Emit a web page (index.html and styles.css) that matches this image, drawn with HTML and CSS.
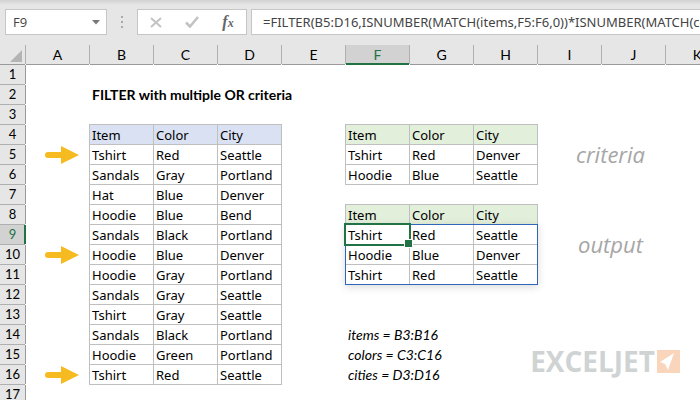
FILE: index.html
```html
<!DOCTYPE html>
<html lang="en">
<head>
    <meta charset="UTF-8">
    <meta name="viewport" content="width=device-width, initial-scale=1.0">
    <title>FILTER with multiple OR criteria</title>
    <link rel="stylesheet" href="styles.css">
</head>
<body>

<header class="formula-bar">
    <div class="name-box">
        <input type="text" class="name-input" value="F9" aria-label="Name box">
        <button class="name-arrow" aria-label="Show names">
            <svg width="8" height="5" viewBox="0 0 8 5"><path d="M0 0h8L4 4.5z" fill="#777"/></svg>
        </button>
    </div>
    <div class="dots"><i></i><i></i><i></i></div>
    <div class="tools">
        <button aria-label="Cancel">
            <svg width="12" height="11" viewBox="0 0 12 11"><path d="M1 1l10 9M11 1L1 10" stroke="#c3c3c3" stroke-width="2" fill="none"/></svg>
        </button>
        <button aria-label="Enter">
            <svg width="14" height="12" viewBox="0 0 14 12"><path d="M1 6.500l4 4L13 1" stroke="#c3c3c3" stroke-width="2.600" fill="none"/></svg>
        </button>
        <button class="fx" aria-label="Insert function"><span>f<small>x</small></span></button>
    </div>
    <input type="text" class="formula" aria-label="Formula" value="=FILTER(B5:D16,ISNUMBER(MATCH(items,F5:F6,0))*ISNUMBER(MATCH(colors">
</header>

<main class="sheet">
    <table>
        <colgroup>
            <col class="col-num">
            <col class="col"><col class="col"><col class="col"><col class="col">
            <col class="col"><col class="col"><col class="col"><col class="col">
            <col class="col"><col class="col"><col class="col">
            <col>
        </colgroup>
        <thead>
            <tr>
                <th class="corner"><svg width="12" height="12" viewBox="0 0 12 12"><path d="M12 0v12H0z" fill="#b4b4b4"/></svg></th>
                <th>A</th><th>B</th><th>C</th><th>D</th><th>E</th><th class="active">F</th>
                <th>G</th><th>H</th><th>I</th><th>J</th><th>K</th><th></th>
            </tr>
        </thead>
        <tbody>
            <tr><th>1</th><td colspan="12"></td></tr>
            <tr><th>2</th><td></td><td colspan="11" class="title">FILTER with multiple OR criteria</td></tr>
            <tr><th>3</th><td colspan="12"></td></tr>
            <tr>
                <th>4</th><td></td>
                <td class="cell blue">Item</td><td class="cell blue">Color</td><td class="cell blue">City</td><td></td>
                <td class="cell green">Item</td><td class="cell green">Color</td><td class="cell green">City</td>
            </tr>
            <tr>
                <th>5</th><td class="arrow"><svg width="34" height="18" viewBox="0 0 34 18"><path d="M3 6h13V0l18 9-18 9v-6H3a3 3 0 010-6z" fill="#f5bb20"/></svg></td>
                <td class="cell">Tshirt</td><td class="cell">Red</td><td class="cell">Seattle</td><td></td>
                <td class="cell">Tshirt</td><td class="cell">Red</td><td class="cell">Denver</td>
                <td colspan="2" class="note">criteria</td>
            </tr>
            <tr>
                <th>6</th><td></td>
                <td class="cell">Sandals</td><td class="cell">Gray</td><td class="cell">Portland</td><td></td>
                <td class="cell">Hoodie</td><td class="cell">Blue</td><td class="cell">Seattle</td>
            </tr>
            <tr>
                <th>7</th><td></td>
                <td class="cell">Hat</td><td class="cell">Blue</td><td class="cell">Denver</td>
            </tr>
            <tr>
                <th>8</th><td></td>
                <td class="cell">Hoodie</td><td class="cell">Blue</td><td class="cell">Bend</td><td></td>
                <td class="cell green">Item</td><td class="cell green">Color</td><td class="cell green">City</td>
            </tr>
            <tr>
                <th class="active">9</th><td></td>
                <td class="cell">Sandals</td><td class="cell">Black</td><td class="cell">Portland</td><td></td>
                <td class="cell selected">Tshirt<div class="spill"></div><div class="cursor"></div></td><td class="cell">Red</td><td class="cell">Seattle</td>
                <td colspan="2" rowspan="2" class="note">output</td>
            </tr>
            <tr>
                <th>10</th><td class="arrow"><svg width="34" height="18" viewBox="0 0 34 18"><path d="M3 6h13V0l18 9-18 9v-6H3a3 3 0 010-6z" fill="#f5bb20"/></svg></td>
                <td class="cell">Hoodie</td><td class="cell">Blue</td><td class="cell">Denver</td><td></td>
                <td class="cell">Hoodie</td><td class="cell">Blue</td><td class="cell">Denver</td>
            </tr>
            <tr>
                <th>11</th><td></td>
                <td class="cell">Hoodie</td><td class="cell">Gray</td><td class="cell">Portland</td><td></td>
                <td class="cell">Tshirt</td><td class="cell">Red</td><td class="cell">Seattle</td>
            </tr>
            <tr>
                <th>12</th><td></td>
                <td class="cell">Sandals</td><td class="cell">Gray</td><td class="cell">Seattle</td>
            </tr>
            <tr>
                <th>13</th><td></td>
                <td class="cell">Tshirt</td><td class="cell">Gray</td><td class="cell">Seattle</td>
            </tr>
            <tr>
                <th>14</th><td></td>
                <td class="cell">Sandals</td><td class="cell">Black</td><td class="cell">Portland</td><td></td>
                <td colspan="3" class="range">items = B3:B16</td>
            </tr>
            <tr>
                <th>15</th><td></td>
                <td class="cell">Hoodie</td><td class="cell">Green</td><td class="cell">Portland</td><td></td>
                <td colspan="3" class="range">colors = C3:C16</td>
            </tr>
            <tr>
                <th>16</th><td class="arrow"><svg width="34" height="18" viewBox="0 0 34 18"><path d="M3 6h13V0l18 9-18 9v-6H3a3 3 0 010-6z" fill="#f5bb20"/></svg></td>
                <td class="cell">Tshirt</td><td class="cell">Red</td><td class="cell">Seattle</td><td></td>
                <td colspan="3" class="range">cities = D3:D16</td>
            </tr>
            <tr><th>17</th><td colspan="12"></td></tr>
        </tbody>
    </table>

    <div class="logo">
        <span>EXCELJET</span>
        <svg width="23" height="23" viewBox="0 0 23 23"><path d="M0 0h23v23H0z" fill="#f9d5bb"/><path d="M17 3L3 12l5 2 3 6z" fill="#fff"/></svg>
    </div>
</main>

</body>
</html>
```
FILE: styles.css
```css
* {
    box-sizing: border-box;
}
body {
    margin: 0;
    height: 100vh;
    display: flex;
    flex-direction: column;
    overflow: hidden;
    background: #fff;
    color: #000;
    font-family: "Noto Sans", sans-serif;
    font-size: 13px;
}
button, input {
    border: none;
    padding: 0;
    margin: 0;
    background: none;
    font: inherit;
    color: #444;
}
input {
    min-width: 0;
    outline: none;
}

/* formula bar */
.formula-bar {
    display: flex;
    flex: none;
    padding: 9px 0 10px 5px;
    background: linear-gradient(#d2d2d2, #e6e6e6 5px);
}
.name-box, .tools, .formula {
    height: 26px;
    background: #fff;
    border: 1px solid #c6c6c6;
}
.name-box {
    display: flex;
    width: 102px;
}
.name-input {
    flex: 1;
    padding-left: 7px;
    font-family: "Open Sans", sans-serif;
}
.name-arrow {
    display: flex;
    align-items: center;
    justify-content: center;
    width: 20px;
}
.dots {
    display: flex;
    flex-direction: column;
    align-items: center;
    justify-content: center;
    gap: 3px;
    width: 30px;
}
.dots i {
    width: 2px;
    height: 2px;
    background: #aaa;
}
.tools {
    display: flex;
    width: 110px;
    margin-right: 4px;
}
.tools button {
    display: flex;
    flex: 1;
    align-items: center;
    justify-content: center;
}
.tools .fx {
    font: italic bold 16px "Liberation Serif", serif;
    color: #666;
}
.fx small {
    font-size: 12px;
}
.formula {
    flex: 1;
    border-right: none;
    padding-left: 11px;
}

/* sheet */
.sheet {
    position: relative;
    flex: 1;
    min-height: 0;
    overflow: hidden;
}
table {
    width: 100%;
    min-width: 731px;
    margin: -1px 0 0 -1px;
    table-layout: fixed;
    border-spacing: 1px;
}
.col-num {
    width: 25px;
}
.col {
    width: 63px;
}
th, td {
    height: 19px;
    padding: 0;
    line-height: 19px;
    white-space: nowrap;
}
th {
    background: #e6e6e6;
    font-family: Lato, sans-serif;
    font-size: 14px;
    font-weight: normal;
}
thead th {
    box-shadow: 1px 0 0 #b0b0b0, 0 1px 0 #999, 0 -1px 0 #e6e6e6;
}
tbody th {
    font-size: 13px;
    box-shadow: 1px 0 0 #999, 0 1px 0 #b0b0b0;
}
.corner svg {
    display: block;
    margin: 3px 0 0 10px;
}
th.active {
    background: #d2d2d2;
    color: #217346;
}
thead th.active {
    box-shadow: inset 0 -1px 0 #217346, 0 1px 0 #217346, 1px 0 0 #b0b0b0;
}
tbody th.active {
    box-shadow: inset -1px 0 0 #217346, 1px 0 0 #217346, 0 1px 0 #b0b0b0;
}
td {
    padding-left: 2px;
}
.cell {
    padding-top: 2px;
    line-height: 17px;
    box-shadow: 0 0 0 1px #bfbfbf;
}
.blue {
    background: #d9e1f2;
}
.green {
    background: #e2efda;
}
.title {
    font-family: Lato, sans-serif;
    font-size: 14px;
    font-weight: bold;
}
.range {
    font-family: Lato, sans-serif;
    font-size: 14px;
    font-style: italic;
}
.arrow svg {
    display: block;
    margin-left: 17px;
}
.note {
    padding-left: 18px;
    text-align: center;
    color: #a6a6a6;
    font-family: "Open Sans", sans-serif;
    font-size: 22px;
    font-style: italic;
}

/* selected cell and the range it spills into */
.selected {
    position: relative;
}
.spill {
    position: absolute;
    top: -1px;
    left: -1px;
    width: 193px;
    height: 61px;
    border: 1px solid #2f66b9;
    box-shadow: 0 2px 8px rgba(0, 0, 0, 0.15);
}
.cursor {
    position: absolute;
    inset: -2px;
    border: 2px solid #217346;
}
.cursor::after {
    content: "";
    position: absolute;
    right: -4px;
    bottom: -4px;
    width: 7px;
    height: 7px;
    background: #217346;
    border: 1px solid #fff;
}

.logo {
    position: absolute;
    right: 20px;
    bottom: 27px;
    display: flex;
    align-items: center;
    gap: 2px;
    color: #d0d3d3;
    font: bold 28px/24px "Open Sans", sans-serif;
}
```
